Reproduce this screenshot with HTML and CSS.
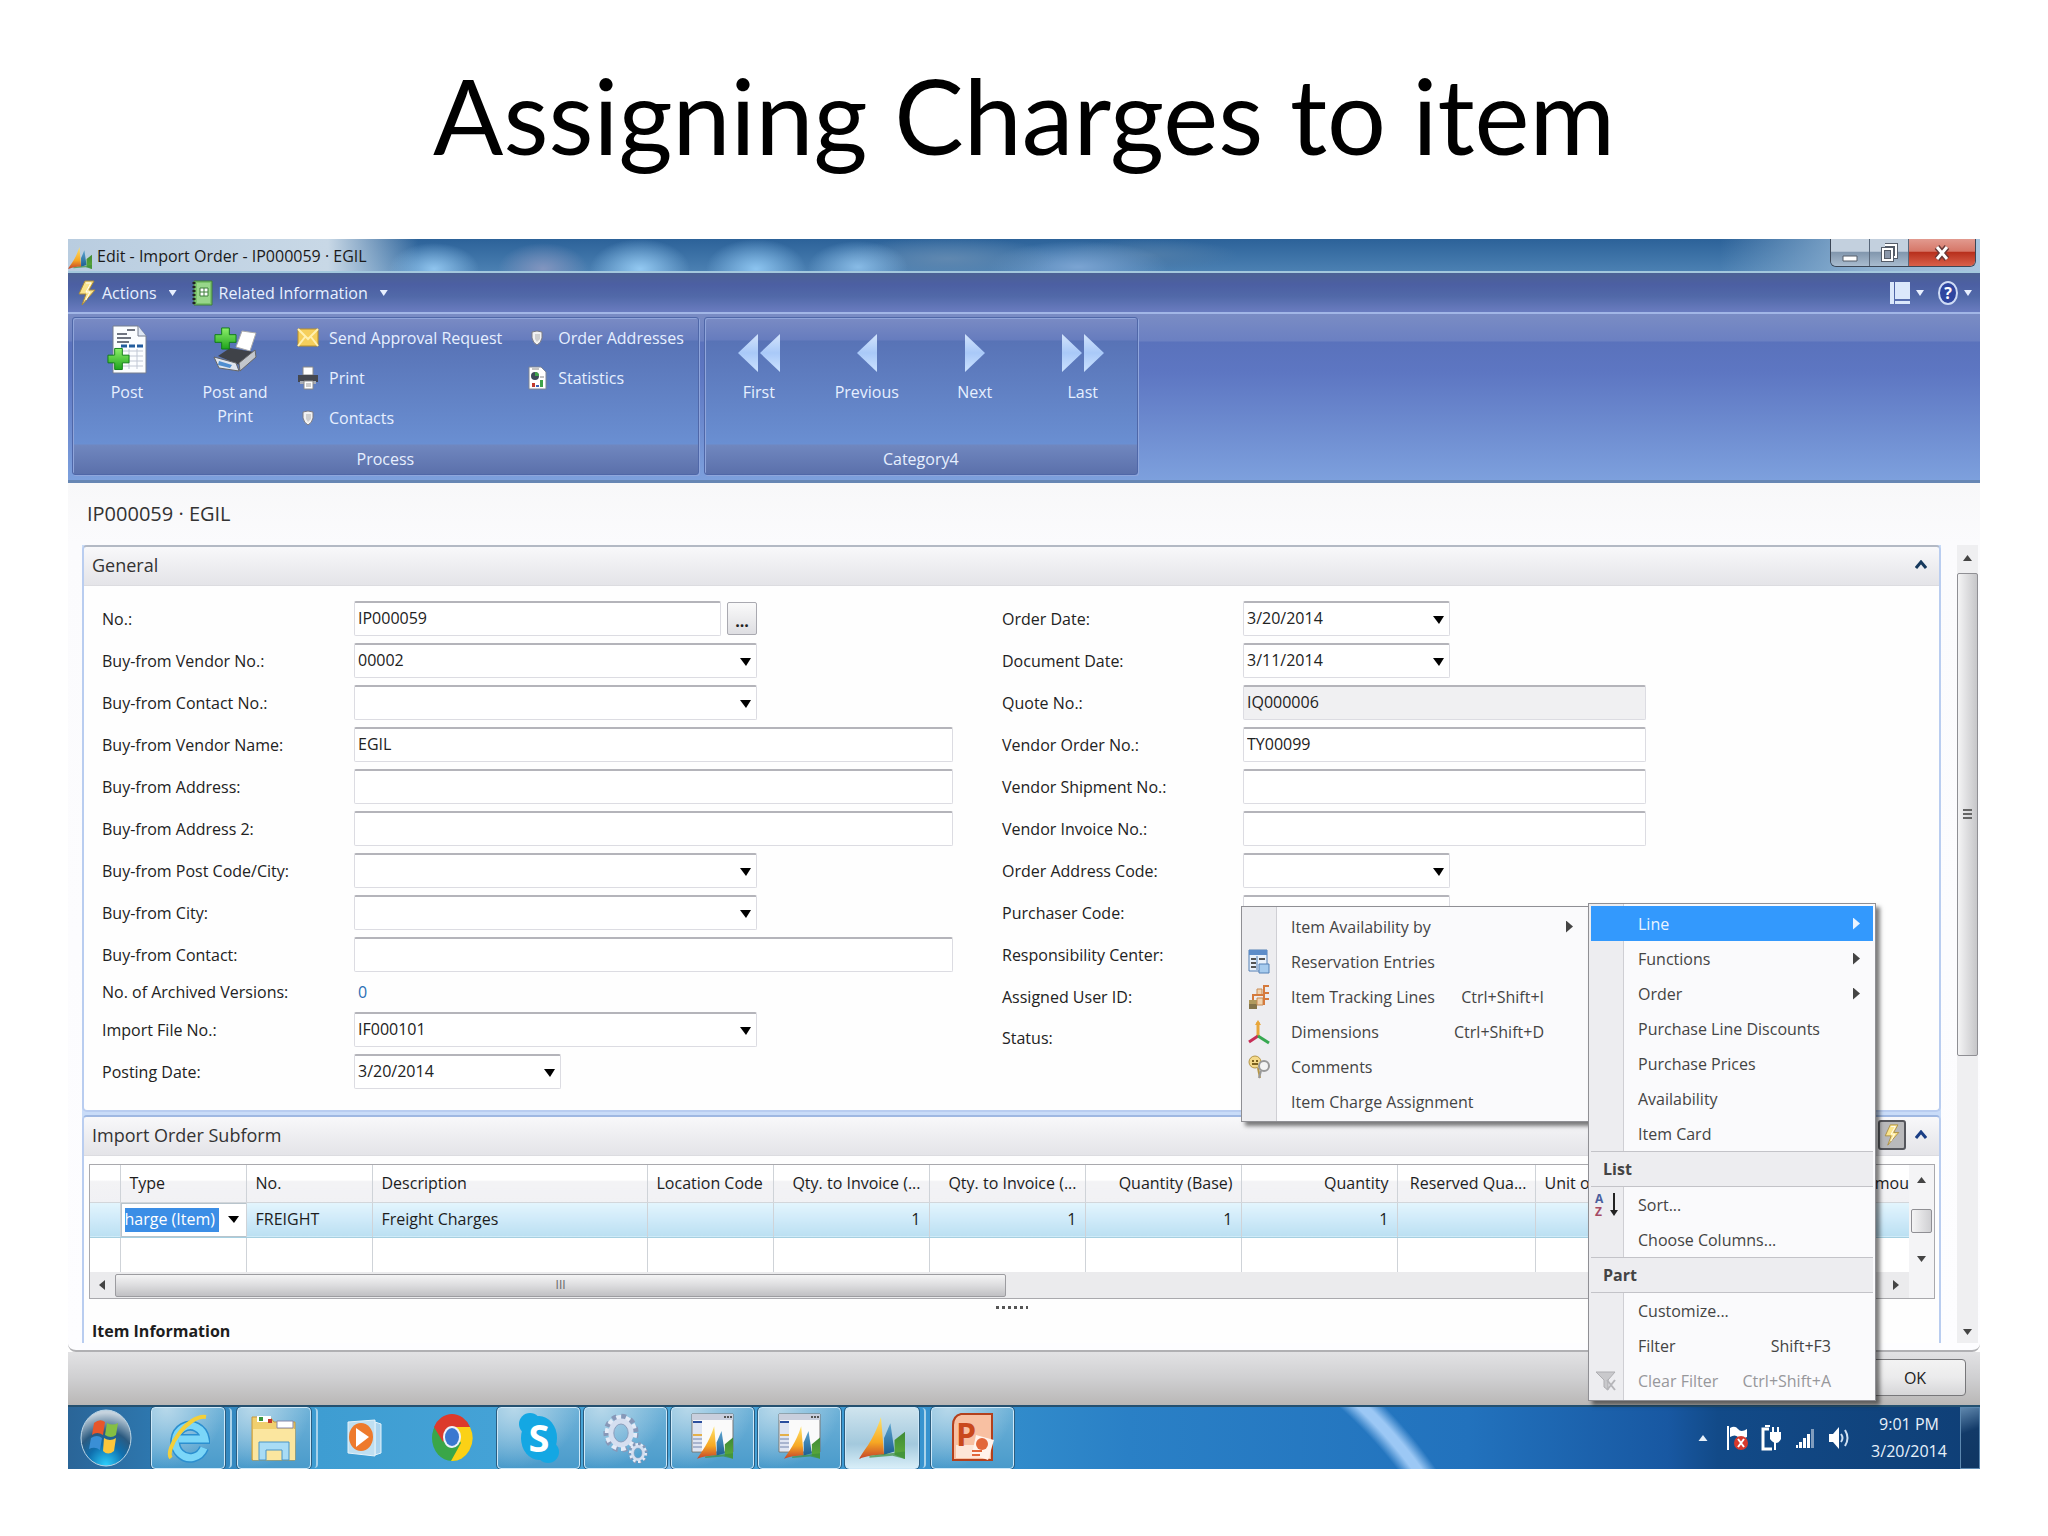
FILE: index.html
```html
<!DOCTYPE html>
<html lang="en">
<head>
<meta charset="utf-8">
<title>Assigning Charges to item</title>
<link rel="stylesheet" href="styles.css">
</head>
<body>
<svg class="defs" aria-hidden="true">
  <defs>
    <linearGradient id="gold" x1="0" y1="0" x2="0" y2="1"><stop offset="0" stop-color="#ffe36a"/><stop offset=".6" stop-color="#f7a823"/><stop offset="1" stop-color="#c4432a"/></linearGradient>
    <linearGradient id="navblue" x1="0" y1="0" x2="0" y2="1"><stop offset="0" stop-color="#5aa3cf"/><stop offset="1" stop-color="#1d5f92"/></linearGradient>
    <linearGradient id="navgreen" x1="0" y1="0" x2="0" y2="1"><stop offset="0" stop-color="#3f8a35"/><stop offset="1" stop-color="#5fae3c"/></linearGradient>
    <linearGradient id="arrow" x1="0" y1="0" x2="0" y2="1"><stop offset="0" stop-color="#d3e4fb"/><stop offset=".5" stop-color="#a9c9f8"/><stop offset="1" stop-color="#cde3ff"/></linearGradient>
    <linearGradient id="plus" x1="0" y1="0" x2="0" y2="1"><stop offset="0" stop-color="#8df06a"/><stop offset="1" stop-color="#1fa31c"/></linearGradient>
    <radialGradient id="orb" cx=".5" cy="1" r=".95"><stop offset="0" stop-color="#2ed3ff"/><stop offset=".4" stop-color="#0f6fae"/><stop offset=".65" stop-color="#2b5a80"/><stop offset="1" stop-color="#c5d3de"/></radialGradient>
    <symbol id="nav" viewBox="0 0 44 44"><path d="M0 42C6 32 14 24 21 2l3 36C14 38 8 39 0 42z" fill="url(#gold)"/><path d="M24 38V22l6-14 4 27z" fill="url(#navblue)"/><path d="M34 38V24l10-8v26z" fill="url(#navgreen)"/><path d="M10 39l34-4v7l-12-3-22 2z" fill="#3c8f3c" opacity=".7"/></symbol>
    <symbol id="navwin" viewBox="0 0 44 50"><path d="M1 1h41v38H1z" fill="#fafafa" stroke="#777"/><path d="M1 1h41v6H1z" fill="#c9cfdd"/><path d="M33 4h2M36 4h2M39 4h2" stroke="#555" stroke-width="2"/><path d="M2 8h9v30H2z" fill="#dfe5f2"/><path d="M2 9h9" stroke="#2c4f9e" stroke-width="2"/><path d="M2 22h9" stroke="#e4b04a" stroke-width="2"/><path d="M2 26h9M2 30h9M2 34h9" stroke="#7083ac"/><use href="#nav" x="6" y="10" width="36" height="39"/></symbol>
    <symbol id="shield" viewBox="0 0 20 20"><path d="M5 4q5-2 10 0v6q-1 5-5 7-4-2-5-7z" fill="#f2f2f2" stroke="#7a7a84"/><path d="M8 6h5v5l-3 3-2-3z" fill="#cfcfcf"/></symbol>
    <symbol id="bigplus" viewBox="0 0 24 24"><path d="M8 1h8v7h7v8h-7v7H8v-7H1V8h7z" fill="url(#plus)" stroke="#0f7d14"/></symbol>
    <symbol id="bolt" viewBox="0 0 18 26"><path d="M7 1h9l-5 9h6L4 25l4-11H1z" fill="#fbe58c" stroke="#a98a3c"/><path d="M8 3h5l-5 9h4l-4 8" fill="none" stroke="#fff" stroke-width="1"/></symbol>
    <symbol id="gear" viewBox="-20 -22 40 44"><ellipse rx="16" ry="18" fill="none" stroke="#8798b8" stroke-width="7" stroke-dasharray="5 5"/><ellipse rx="15" ry="17" fill="none" stroke="#e4ebf7" stroke-width="6" stroke-dasharray="5 5"/><ellipse rx="11" ry="13" fill="none" stroke="#d5dff0" stroke-width="6"/><ellipse rx="8" ry="10" fill="none" stroke="#8798b8"/></symbol>
  </defs>
</svg>

<main class="slide">
  <h1 class="slide-title">Assigning Charges to item</h1>

  <section class="desktop">
    <header class="titlebar">
      <svg class="titlebar-icon" viewBox="0 0 44 44"><use href="#nav"/></svg>
      <span class="titlebar-text">Edit - Import Order - IP000059 · EGIL</span>
      <div class="win-buttons">
        <button class="win-btn" aria-label="Minimize"><svg width="18" height="20" viewBox="0 0 18 20"><path d="M2 13h14v5H2z" fill="#fff" stroke="#555c68"/></svg></button>
        <button class="win-btn" aria-label="Restore"><svg width="20" height="20" viewBox="0 0 20 20"><path d="M6 2h11v12h-2" fill="none" stroke="#555c68" stroke-width="4"/><path d="M6 2h11v12h-2" fill="none" stroke="#fff" stroke-width="2"/><path d="M4 6h9v11H4z" fill="#8a97aa" stroke="#555c68" stroke-width="4"/><path d="M4 6h9v11H4z" fill="none" stroke="#fff" stroke-width="2"/></svg></button>
        <button class="win-btn win-close" aria-label="Close"><svg width="18" height="18" viewBox="0 0 18 18"><path d="M4 3l10 12M14 3L4 15" stroke="#6b3a38" stroke-width="6"/><path d="M4 3l10 12M14 3L4 15" stroke="#fff" stroke-width="3"/></svg></button>
      </div>
    </header>

    <nav class="menubar">
      <button class="menu-btn"><svg width="18" height="26"><use href="#bolt"/></svg>Actions<span class="caret"></span></button>
      <button class="menu-btn"><svg width="22" height="26" viewBox="0 0 22 26"><path d="M3 1h18v24H3z" fill="#7cc46c" stroke="#3f7f3a"/><path d="M6 3h13v20H6z" fill="#98d68a"/><path d="M9 8h8v8H9z" fill="#fff" stroke="#3f7f3a"/><path d="M13 8v8M9 12h8" stroke="#3f7f3a"/><path d="M3 2v23" stroke="#222" stroke-width="3" stroke-dasharray="2 2"/></svg>Related Information<span class="caret"></span></button>
      <div class="menubar-right">
        <button class="menu-btn" aria-label="Layout"><svg width="20" height="24" viewBox="0 0 20 24"><path d="M0 1h4v22H0zM5 1h15v17H5zM5 20h15v3H5z" fill="#dbe8fb"/></svg><span class="caret"></span></button>
        <button class="menu-btn" aria-label="Help"><svg width="20" height="24" viewBox="0 0 20 24"><ellipse cx="10" cy="12" rx="9" ry="11" fill="#2f46a0" stroke="#cfdcf5" stroke-width="2"/><text x="10" y="18" text-anchor="middle" class="icon-help">?</text></svg><span class="caret"></span></button>
      </div>
    </nav>

    <div class="ribbon">
      <div class="ribbon-group">
        <div class="ribbon-body process">
          <button class="big-btn"><svg width="40" height="50" viewBox="0 0 40 50"><path d="M6 1h25l8 10v37H6z" fill="#fbfdff" stroke="#777f90"/><path d="M31 1v10h8" fill="#dfe7f3" stroke="#777f90"/><path d="M10 9h10M10 13h14M10 17h12M20 5h8" stroke="#6f7480" stroke-width="2"/><path d="M14 21h6M22 21h6M30 21h6" stroke="#235d9e" stroke-width="3"/><path d="M14 26h22M14 31h22M14 36h22M14 41h22M22 24v20M30 24v20" stroke="#c0c7d4"/><use href="#bigplus" x="0" y="22" width="23" height="24"/></svg>Post</button>
          <button class="big-btn"><svg width="46" height="50" viewBox="0 0 46 50"><path d="M24 22l6-16 14 2-6 18z" fill="#fff" stroke="#aaa"/><path d="M6 31l12-8 24 4-12 14z" fill="#3f4248"/><path d="M2 32l22 6 3 8-20-3z" fill="#dfe5ee" stroke="#666"/><path d="M27 38l16-13 1 7-16 14z" fill="#c3c7cc" stroke="#666"/><path d="M7 36l13 4-2 3-12-3z" fill="#4f8ed0"/><use href="#bigplus" x="2" y="1" width="23" height="25"/></svg>Post and<br>Print</button>
          <div class="small-col">
            <button class="small-btn"><svg width="22" height="20" viewBox="0 0 22 20"><path d="M1 1h20v17H1z" fill="#f6cf5c" stroke="#b98f28"/><path d="M1 1l10 10L21 1M1 18l7-9M21 18l-7-9" fill="none" stroke="#fff0b0" stroke-width="2"/></svg>Send Approval Request</button>
            <button class="small-btn"><svg width="22" height="24" viewBox="0 0 22 24"><path d="M6 1h10v8H6z" fill="#fff" stroke="#888"/><path d="M1 9h20v7H1z" fill="#44474f"/><path d="M3 15h16v3H3z" fill="#a9adb5"/><path d="M7 15h9v8H7z" fill="#fff" stroke="#888"/><path d="M9 18h5M9 20h5" stroke="#999"/></svg>Print</button>
            <button class="small-btn"><svg width="22" height="20" viewBox="0 0 20 20"><use href="#shield"/></svg>Contacts</button>
          </div>
          <div class="small-col">
            <button class="small-btn"><svg width="22" height="20" viewBox="0 0 20 20"><use href="#shield"/></svg>Order Addresses</button>
            <button class="small-btn"><svg width="22" height="24" viewBox="0 0 22 24"><path d="M3 1h12l5 5v17H3z" fill="#fff" stroke="#7d8596"/><circle cx="9" cy="10" r="4" fill="#3c4a58"/><path d="M9 10V6a4 4 0 0 1 4 4z" fill="#3fa34a"/><path d="M14 11h4M6 3h7" stroke="#888"/><path d="M6 17h3v4H6z" fill="#c23b2e"/><path d="M10 19h3v2h-3z" fill="#3c62b8"/><path d="M14 14h3v7h-3z" fill="#3fa34a"/></svg>Statistics</button>
          </div>
        </div>
        <div class="ribbon-caption">Process</div>
      </div>
      <div class="ribbon-group">
        <div class="ribbon-body">
          <button class="big-btn"><svg width="42" height="50" viewBox="0 0 42 50"><path d="M20 9v38L0 28zM42 9v38L22 28z" fill="url(#arrow)"/></svg>First</button>
          <button class="big-btn"><svg width="20" height="50" viewBox="0 0 20 50"><path d="M20 9v38L0 28z" fill="url(#arrow)"/></svg>Previous</button>
          <button class="big-btn"><svg width="20" height="50" viewBox="0 0 20 50"><path d="M0 9v38l20-19z" fill="url(#arrow)"/></svg>Next</button>
          <button class="big-btn"><svg width="42" height="50" viewBox="0 0 42 50"><path d="M0 9v38l20-19zM22 9v38l20-19z" fill="url(#arrow)"/></svg>Last</button>
        </div>
        <div class="ribbon-caption">Category4</div>
      </div>
    </div>

    <div class="page">
      <h2 class="page-title">IP000059 · EGIL</h2>
      <div class="scroller">
        <div class="panels">
          <section class="panel">
            <header class="panel-head"><h3>General</h3><button class="chev" aria-label="Collapse General"><svg width="12" height="10" viewBox="0 0 12 10"><path d="M1 8l5-6 5 6" fill="none" stroke="#173a5e" stroke-width="3"/></svg></button></header>
            <form class="fields">
              <div class="col col-left">
                <label for="f1">No.:</label><div class="with-btn"><input id="f1" class="mid" value="IP000059"><button type="button" class="assist" aria-label="Assist edit">...</button></div>
                <label for="f2">Buy-from Vendor No.:</label><select id="f2" class="mid"><option>00002</option></select>
                <label for="f3">Buy-from Contact No.:</label><select id="f3" class="mid"><option></option></select>
                <label for="f4">Buy-from Vendor Name:</label><input id="f4" value="EGIL">
                <label for="f5">Buy-from Address:</label><input id="f5">
                <label for="f6">Buy-from Address 2:</label><input id="f6">
                <label for="f7">Buy-from Post Code/City:</label><select id="f7" class="mid"><option></option></select>
                <label for="f8">Buy-from City:</label><select id="f8" class="mid"><option></option></select>
                <label for="f9">Buy-from Contact:</label><input id="f9">
                <span class="lbl">No. of Archived Versions:</span><a class="count" href="#">0</a>
                <label for="f10">Import File No.:</label><select id="f10" class="mid"><option>IF000101</option></select>
                <label for="f11">Posting Date:</label><select id="f11" class="short"><option>3/20/2014</option></select>
              </div>
              <div class="col col-right">
                <label for="g1">Order Date:</label><select id="g1" class="short"><option>3/20/2014</option></select>
                <label for="g2">Document Date:</label><select id="g2" class="short"><option>3/11/2014</option></select>
                <label for="g3">Quote No.:</label><input id="g3" class="readonly" value="IQ000006" readonly>
                <label for="g4">Vendor Order No.:</label><input id="g4" value="TY00099">
                <label for="g5">Vendor Shipment No.:</label><input id="g5">
                <label for="g6">Vendor Invoice No.:</label><input id="g6">
                <label for="g7">Order Address Code:</label><select id="g7" class="short"><option></option></select>
                <label for="g8">Purchaser Code:</label><select id="g8" class="short"><option></option></select>
                <label for="g9">Responsibility Center:</label><select id="g9" class="short"><option></option></select>
                <label for="g10">Assigned User ID:</label><select id="g10" class="short"><option></option></select>
                <span class="lbl">Status:</span>
              </div>
            </form>
          </section>

          <section class="panel subform">
            <header class="panel-head"><h3>Import Order Subform</h3><button class="bolt-btn" aria-label="Line actions"><svg width="16" height="22"><use href="#bolt"/></svg></button><button class="chev" aria-label="Collapse Import Order Subform"><svg width="12" height="10" viewBox="0 0 12 10"><path d="M1 8l5-6 5 6" fill="none" stroke="#1b3f86" stroke-width="3"/></svg></button></header>
            <div class="grid-box">
              <div class="grid-main">
                <table class="grid">
                  <colgroup><col class="c-sel"><col class="c-type"><col class="c-type"><col class="c-desc"><col class="c-type"><col class="c-qty"><col class="c-qty"><col class="c-qty"><col class="c-qty"><col class="c-res"><col class="c-unit"><col></colgroup>
                  <thead><tr><th></th><th>Type</th><th>No.</th><th>Description</th><th>Location Code</th><th class="num">Qty. to Invoice (...</th><th class="num">Qty. to Invoice (...</th><th class="num">Quantity (Base)</th><th class="num">Quantity</th><th class="num">Reserved Qua...</th><th>Unit of</th><th class="last">Line Amou</th></tr></thead>
                  <tbody>
                    <tr class="current"><td></td><td class="edit"><select aria-label="Type"><option>harge (Item)</option></select></td><td>FREIGHT</td><td>Freight Charges</td><td></td><td class="num">1</td><td class="num">1</td><td class="num">1</td><td class="num">1</td><td></td><td></td><td></td></tr>
                    <tr><td></td><td></td><td></td><td></td><td></td><td></td><td></td><td></td><td></td><td></td><td></td><td></td></tr>
                  </tbody>
                </table>
                <div class="hscroll"><span class="tri left"></span><div class="hthumb"><span class="grip">III</span></div><span class="tri right"></span></div>
              </div>
              <div class="gscroll"><span class="tri up"></span><div class="gthumb"></div><span class="tri down"></span></div>
            </div>
            <div class="splitter"></div>
            <h4 class="info">Item Information</h4>
          </section>
        </div>
        <div class="vscroll"><span class="tri up"></span><div class="vthumb"><span class="vgrip"></span></div><span class="tri down"></span></div>
      </div>
    </div>

    <footer class="actions"><button class="ok">OK</button></footer>

    <nav class="taskbar">
      <button class="orb" aria-label="Start"><svg width="54" height="58" viewBox="0 0 54 58"><ellipse cx="27" cy="29" rx="25" ry="28" fill="url(#orb)" stroke="#bcd6e6"/><path d="M15 14q6-5 11-1l-2 13q-6-4-11 0z" fill="#e8562a"/><path d="M28 14q6 3 11 0l-2 12q-5 4-11 0z" fill="#85bf43"/><path d="M12 29q6-4 11 0l-2 12q-5-4-11-1z" fill="#3a8fd6"/><path d="M25 29q6 4 12 0l-2 13q-6 5-11 0z" fill="#fcc63b"/></svg></button>
      <button class="task stacked" aria-label="Internet Explorer"><svg width="44" height="52" viewBox="0 0 44 52"><path d="M38 36A15 16 0 1 1 39 27H13" fill="none" stroke="#2b8fd0" stroke-width="10"/><path d="M38 36A15 16 0 1 1 39 27H13" fill="none" stroke="#7bd6f8" stroke-width="7"/><path d="M5 46C-2 38 22 2 40 5" fill="none" stroke="#f3cf3b" stroke-width="4"/></svg></button>
      <button class="task stacked" aria-label="File Explorer"><svg width="46" height="48" viewBox="0 0 46 48"><path d="M1 3h18l4 5h21v38H1z" fill="#f0cf6e" stroke="#c79a3b"/><path d="M6 2h14v6H6z" fill="#fff"/><path d="M8 3h4v4H8z" fill="#39943c"/><path d="M17 5h4v4h-4z" fill="#c2352b"/><path d="M26 7h16v7H26z" fill="#fff" stroke="#88a"/><path d="M2 15h42v31H2z" fill="#fbe69f"/><path d="M8 46V28h30v18h-7V36H15v10z" fill="#a9dcf5" stroke="#4a94c4"/></svg></button>
      <button class="task flat" aria-label="Media Player"><svg width="36" height="38" viewBox="0 0 36 38"><path d="M28 3l6 2v29l-6 2z" fill="#a9d3ee" stroke="#e2f2fb"/><path d="M1 3l27-2v36L1 34z" fill="#bfdff1" stroke="#e6f3fa"/><ellipse cx="14" cy="18" rx="12" ry="14" fill="#ee7a2c"/><path d="M9 9l13 9-13 10z" fill="#fff"/></svg></button>
      <button class="task flat" aria-label="Chrome"><svg width="42" height="48" viewBox="0 0 42 48"><ellipse cx="21" cy="24" rx="20" ry="23" fill="#3aa648"/><path d="M3 13A20 23 0 0 1 39 13H21L12 28z" fill="#dc3a2c"/><path d="M39 13A20 23 0 0 1 20 47l10-18-9-16z" fill="#fbd116"/><ellipse cx="21" cy="23" rx="9" ry="11" fill="#eef3fa"/><ellipse cx="21" cy="23" rx="7" ry="9" fill="#3b78d0"/></svg></button>
      <button class="task" aria-label="Skype"><svg width="42" height="54" viewBox="0 0 42 54"><ellipse cx="21" cy="27" rx="18" ry="22" fill="#14a7e3"/><circle cx="12" cy="13" r="11" fill="#14a7e3"/><circle cx="30" cy="41" r="11" fill="#14a7e3"/><text x="21" y="41" text-anchor="middle" class="icon-skype">S</text></svg></button>
      <button class="task" aria-label="Services"><svg width="46" height="52" viewBox="0 0 46 52"><use href="#gear" x="0" y="1" width="36" height="40"/><use href="#gear" x="25" y="30" width="20" height="22"/></svg></button>
      <button class="task" aria-label="Dynamics NAV"><svg width="44" height="50"><use href="#navwin"/></svg></button>
      <button class="task" aria-label="Dynamics NAV"><svg width="44" height="50"><use href="#navwin"/></svg></button>
      <button class="task stacked active" aria-label="Dynamics NAV client"><svg width="46" height="46"><use href="#nav"/></svg></button>
      <button class="task" aria-label="PowerPoint"><svg width="42" height="50" viewBox="0 0 42 50"><path d="M9 1h31v46H1V12Q1 3 9 1z" fill="#f8c0a2" stroke="#b3401c" stroke-width="2"/><path d="M4 32h34v13H4z" fill="#fde6d8"/><path d="M24 22l18 5-6 20-16-6z" fill="#fff3ec"/><circle cx="30" cy="31" r="6" fill="#e2673a"/><path d="M20 38h10M20 42h8" stroke="#e2673a" stroke-width="2"/><text x="14" y="33" text-anchor="middle" class="icon-ppt">P</text></svg></button>
      <div class="tray">
        <button class="tray-btn" aria-label="Show hidden icons"><svg width="10" height="6" viewBox="0 0 12 8"><path d="M6 0l6 8H0z" fill="#e6f0fa"/></svg></button>
        <button class="tray-btn" aria-label="Action Center"><svg width="22" height="26" viewBox="0 0 22 26"><path d="M2 1v24" stroke="#fff" stroke-width="2"/><path d="M4 3q5-3 8 1t9 0v8q-6 3-9 0t-8 0z" fill="#fff"/><circle cx="15" cy="18" r="7" fill="#d8392c"/><path d="M12 14l6 8M18 14l-6 8" stroke="#fff" stroke-width="2"/></svg></button>
        <button class="tray-btn" aria-label="Power"><svg width="22" height="26" viewBox="0 0 22 26"><path d="M9 4H3v20h9" fill="none" stroke="#fff" stroke-width="3"/><path d="M5 1h5" stroke="#fff" stroke-width="2"/><path d="M10 7h11v7q-2 4-5 4t-6-4z" fill="#fff"/><path d="M13 2v5M18 2v5M15 17v8" stroke="#fff" stroke-width="2"/></svg></button>
        <button class="tray-btn" aria-label="Network"><svg width="20" height="20" viewBox="0 0 20 20"><path d="M1 17h2v3H1zM4 14h3v6H4zM8 10h3v10H8zM12 6h3v14h-3z" fill="#fff"/><path d="M16 1h3v19h-3z" fill="#7f9cbd"/></svg></button>
        <button class="tray-btn" aria-label="Volume"><svg width="22" height="24" viewBox="0 0 22 24"><path d="M1 8h4l6-7v22l-6-7H1z" fill="#fff"/><path d="M13 8q3 4 0 8M17 4q5 8 0 16" fill="none" stroke="#cfe0f2" stroke-width="2"/></svg></button>
        <div class="clock">9:01 PM<br>3/20/2014</div>
        <button class="show-desktop" aria-label="Show desktop"></button>
      </div>
    </nav>

    <ul class="popup submenu">
      <li><button><span class="ic"></span><span class="tx">Item Availability by</span><span class="more"></span></button></li>
      <li><button><span class="ic"><svg width="22" height="26" viewBox="0 0 22 26"><path d="M1 1h18v21H1z" fill="#e9f1fb" stroke="#5580b5"/><path d="M1 1h18v5H1z" fill="#5c8cc9"/><path d="M3 10h5M3 14h5M3 18h5M11 10h6" stroke="#555" stroke-width="2"/><path d="M9 7v14" stroke="#5580b5"/><path d="M11 15h10v9H11z" fill="#a6cbee" stroke="#5580b5"/></svg></span><span class="tx">Reservation Entries</span></button></li>
      <li><button><span class="ic"><svg width="22" height="26" viewBox="0 0 22 26"><path d="M1 16h8v9H1z" fill="#84744a"/><path d="M1 16h8v4H1z" fill="#b09a5e"/><path d="M9 14h6v7H9zM9 5h5v6H9z" fill="#f0d3b0" stroke="#c98b52"/><path d="M21 2h-5v19M16 9h5M16 15h5M5 16v-5h11" fill="none" stroke="#d57a3c" stroke-width="2"/></svg></span><span class="tx">Item Tracking Lines</span><kbd>Ctrl+Shift+I</kbd></button></li>
      <li><button><span class="ic"><svg width="22" height="26" viewBox="0 0 22 26"><path d="M10 17V3" stroke="#e8a63a" stroke-width="3"/><path d="M7 6l3-5 3 5z" fill="#e8a63a"/><path d="M10 17l-9 6" stroke="#c72d56" stroke-width="3"/><path d="M10 17l11 7" stroke="#37a850" stroke-width="3"/></svg></span><span class="tx">Dimensions</span><kbd>Ctrl+Shift+D</kbd></button></li>
      <li><button><span class="ic"><svg width="22" height="26" viewBox="0 0 22 26"><ellipse cx="7" cy="8" rx="6" ry="6" fill="#f4d98a" stroke="#b59545"/><path d="M4 7h2M8 7h2M4 10h6" stroke="#7d6220" stroke-width="2"/><path d="M10 14l2 10" stroke="#b59545" stroke-width="2"/><circle cx="16" cy="12" r="5" fill="#f4f4f4" stroke="#999" stroke-width="2"/><path d="M13 17l-2 7" stroke="#999" stroke-width="2"/></svg></span><span class="tx">Comments</span></button></li>
      <li><button><span class="ic"></span><span class="tx">Item Charge Assignment</span></button></li>
    </ul>

    <ul class="popup mainmenu">
      <li><button class="hot"><span class="ic"></span><span class="tx">Line</span><span class="more"></span></button></li>
      <li><button><span class="ic"></span><span class="tx">Functions</span><span class="more"></span></button></li>
      <li><button><span class="ic"></span><span class="tx">Order</span><span class="more"></span></button></li>
      <li><button><span class="ic"></span><span class="tx">Purchase Line Discounts</span></button></li>
      <li><button><span class="ic"></span><span class="tx">Purchase Prices</span></button></li>
      <li><button><span class="ic"></span><span class="tx">Availability</span></button></li>
      <li><button><span class="ic"></span><span class="tx">Item Card</span></button></li>
      <li class="head">List</li>
      <li><button><span class="ic sort"><span class="az"><span>A</span><span>Z</span></span><svg width="8" height="26" viewBox="0 0 8 26"><path d="M4 1v20" stroke="#222" stroke-width="2"/><path d="M0 18h8l-4 6z" fill="#222"/></svg></span><span class="tx">Sort...</span></button></li>
      <li><button><span class="ic"></span><span class="tx">Choose Columns...</span></button></li>
      <li class="head">Part</li>
      <li><button><span class="ic"></span><span class="tx">Customize...</span></button></li>
      <li><button><span class="ic"></span><span class="tx">Filter</span><kbd>Shift+F3</kbd></button></li>
      <li><button disabled><span class="ic"><svg width="22" height="22" viewBox="0 0 22 22"><path d="M1 2h19l-7 8v10l-4-3v-7z" fill="#c9c9cc" stroke="#adadb1"/><path d="M12 10l8 10M20 10l-8 10" stroke="#b5b5b9" stroke-width="2"/></svg></span><span class="tx">Clear Filter</span><kbd>Ctrl+Shift+A</kbd></button></li>
    </ul>
  </section>
</main>
</body>
</html>
```
FILE: styles.css
```css
* { box-sizing: border-box; }
body { margin: 0; background: #fff; color: #222; font: 16px/24px "Open Sans", "Noto Sans", sans-serif; }
h1, h2, h3, h4, ul { margin: 0; padding: 0; font-weight: 400; }
button, input, select { font: inherit; color: inherit; margin: 0; }
button { background: none; border: 0; padding: 0; }
svg { display: block; flex: none; }
.defs { position: absolute; width: 0; height: 0; }

.slide { padding: 0 68px 68px; }
.slide-title { padding: 45px 0 54px; text-align: center; font: 104px/140px Lato, sans-serif; color: #000; }
.desktop { position: relative; display: flex; flex-direction: column; overflow: hidden; }

/* title bar */
.titlebar { display: flex; align-items: flex-start; height: 34px; padding-right: 4px; border-bottom: 2px solid #a3c8dd; color: #1a1a1a;
  background:
    radial-gradient(ellipse 45px 26px at 366px 30px, #8fc4ee, transparent),
    radial-gradient(ellipse 45px 26px at 475px 30px, #8295bf, transparent),
    radial-gradient(ellipse 50px 30px at 572px 30px, #93c9f2, transparent),
    radial-gradient(ellipse 50px 30px at 688px 30px, #8cc4f0, transparent),
    radial-gradient(ellipse 50px 26px at 790px 28px, #88bbe6, transparent),
    radial-gradient(ellipse 110px 22px at 880px 20px, #6088b0, transparent),
    radial-gradient(ellipse 90px 26px at 1010px 28px, #7ba4d2, transparent),
    radial-gradient(ellipse 90px 16px at 1080px 16px, #4f7ca8, transparent),
    linear-gradient(90deg, #b9cde0 0, #c8d8e6 260px, transparent 350px, transparent calc(100% - 260px), #8fb2d2 calc(100% - 110px), #a9c6df),
    linear-gradient(#2c6299, #4b80b2); }
.titlebar-icon { width: 24px; height: 26px; margin: 6px 5px 0 0; }
.titlebar-text { padding-top: 5px; }
.win-buttons { display: flex; margin-left: auto; border: 1px solid #3b4656; border-top: 0; border-radius: 0 0 6px 6px; overflow: hidden; }
.win-btn { display: flex; align-items: center; justify-content: center; width: 39px; height: 27px; border-right: 1px solid #58677a; background: linear-gradient(#c3d0de 45%, #8297ae 50%, #a9bccf); }
.win-close { width: 66px; border-right: 0; background: linear-gradient(#e29a8f 0, #d67768 45%, #b8301d 50%, #d9604a); }

/* menu bar */
.menubar { display: flex; align-items: center; gap: 14px; height: 41px; padding: 1px 8px 0 10px; color: #e8f0ff; background: linear-gradient(#4c6294, #4c5fa3 30%, #5169a8 60%, #6a7cc0); border-bottom: 2px solid #a2b6e6; }
.menu-btn { display: flex; align-items: center; gap: 6px; }
.caret { width: 8px; height: 6px; margin-left: 6px; background: currentColor; clip-path: polygon(0 0, 100% 0, 50% 100%); }
.menubar-right { display: flex; gap: 14px; margin-left: auto; }
.menubar-right .caret { margin-left: 0; }
.icon-help { font: 700 16px "Open Sans", sans-serif; fill: #fff; }

/* ribbon */
.ribbon { display: flex; gap: 5px; height: 169px; padding: 3px 5px 5px 4px; color: #e6efff; background: linear-gradient(#7a8cc4, #6b80c2 27px, #5a72bc 28px, #5d76c2 35%, #7da0dd); border-bottom: 3px solid #6787b4; }
.ribbon-group { display: flex; flex-direction: column; border: 1px solid #4f67a8; border-radius: 3px; box-shadow: inset 1px 1px #90a5da, 1px 1px #8fa6dc; background: linear-gradient(#7a8bc4, #667cbe 22px, #5873b6 23px, #6a8fd2 126px, #7087bf 127px, #5b70ab); }
.ribbon-body { display: flex; flex: 1; padding: 7px 0 0; }
.ribbon-body.process { padding-right: 14px; }
.big-btn { display: flex; flex-direction: column; align-items: center; width: 108px; line-height: 24px; }
.big-btn svg { margin-bottom: 5px; }
.small-col { display: flex; flex-direction: column; margin: -7px 0 0 8px; }
.small-col + .small-col { margin-left: 24px; }
.small-btn { display: flex; align-items: center; gap: 10px; height: 40px; line-height: 24px; white-space: nowrap; }
.ribbon-caption { height: 31px; line-height: 32px; text-align: center; }

/* page */
.page { background: linear-gradient(#f8f8f9, #fbfbfd 60px, #fdfdff); padding: 0 0 7px; border-bottom: 2px solid #b0b0b3; border-radius: 0 0 8px 8px; }
.page-title { padding: 15px 19px; font-size: 20px; line-height: 32px; color: #333; }
.scroller { display: flex; gap: 16px; padding: 0 2px 0 14px; }
.panels { flex: 1; min-width: 0; display: flex; flex-direction: column; gap: 3px; background: #c9dcf8; }
.panel { background: #fefefe; border: 2px solid #b9cdf0; border-top-color: #b3b9c4; border-radius: 5px; }
.panel-head { display: flex; align-items: center; height: 39px; padding: 0 12px 3px 8px; background: linear-gradient(#f8f8fa, #e4e4e8); border-bottom: 1px solid #dcdce0; border-radius: 4px 4px 0 0; }
.panel-head h3 { font-size: 18px; line-height: 24px; margin-right: auto; color: #333; }
.chev { width: 12px; height: 20px; display: flex; align-items: center; }
.fields { display: flex; gap: 49px; padding: 15px 20px 21px 18px; color: #222; }
.col { display: grid; row-gap: 7px; grid-auto-rows: minmax(26px, auto); align-items: center; align-content: start; }
.col-left { grid-template-columns: 252px 599px; }
.col-right { grid-template-columns: 241px 403px; }
.col label, .lbl { line-height: 26px; white-space: nowrap; }
.col-right .lbl { line-height: 35px; }
.fields input, .fields select { width: 100%; height: 35px; padding: 0 3px 2px; border: 1px solid #dcdce2; border-top: 2px solid #b4b4ba; border-radius: 2px; background: #fff; color: #222; }
.fields select { appearance: none; background: #fff url("data:image/svg+xml,%3Csvg xmlns='http://www.w3.org/2000/svg' width='11' height='8'%3E%3Cpath d='M0 0h11L6 8z'/%3E%3C/svg%3E") no-repeat right 5px top 13px; }
.fields .readonly { background: #f0f0f2; }
.fields .mid { width: 403px; }
.fields .short { width: 207px; }
.with-btn { display: flex; align-items: center; gap: 6px; }
.with-btn .mid { width: 367px; }
.assist { width: 30px; height: 33px; padding-top: 5px; border: 1px solid #a9a9b0; border-radius: 2px; background: linear-gradient(#fafafa, #dedee2); font-weight: 700; }
.count { color: #2a6fb5; text-decoration: none; line-height: 26px; padding-left: 4px; }

/* subform */
.subform { border-bottom: 0; border-radius: 5px 5px 0 0; border-top-color: #9fb8e2; }
.bolt-btn { display: flex; align-items: center; justify-content: center; width: 28px; height: 30px; margin-right: 9px; border: 2px solid #55565c; border-radius: 3px; background: #b9b9bb; }
.grid-box { display: flex; margin: 8px 4px 0 5px; border: 1px solid #a9a9ad; background: #fff; }
.grid-main { flex: 1; min-width: 0; }
.grid { width: 100%; table-layout: fixed; border-collapse: collapse; color: #1d1d1d; }
.grid th, .grid td { padding: 0 9px; border-right: 1px solid #cfd3d8; text-align: left; font-weight: 400; white-space: nowrap; overflow: hidden; }
.grid th { height: 37px; background: linear-gradient(#fff 40%, #f3f3f5 45%, #f1f1f4); border-bottom: 1px solid #d2d6da; }
.grid td { height: 35px; padding-bottom: 2px; }
.grid .num { text-align: right; padding-right: 8px; padding-left: 8px; }
.grid .last { padding: 0; text-align: right; }
.grid .last, .grid td:last-child { border-right: 0; }
.grid .current td { border-bottom: 1px solid #a5cfe0; background: linear-gradient(#e3f5fd, #cfeaf9 50%, #bbe0f2); }
.grid .edit { padding: 0; }
.grid .edit select { display: block; width: 100%; height: 34px; padding: 0 0 2px 3px; border: 1px solid #b8c4cc; border-right: 0; appearance: none; color: #fff;
  background: url("data:image/svg+xml,%3Csvg xmlns='http://www.w3.org/2000/svg' width='11' height='7'%3E%3Cpath d='M0 0h11L6 7z'/%3E%3C/svg%3E") no-repeat right 7px center, linear-gradient(#3b8ee6, #3b8ee6) no-repeat 3px 4px / 94px 24px, #fff; }
.c-sel { width: 30px; } .c-type { width: 126px; } .c-desc { width: 275px; } .c-qty { width: 156px; } .c-res { width: 138px; } .c-unit { width: 186px; }
.hscroll { display: flex; align-items: center; height: 26px; background: #ebebed; }
.hscroll .tri { margin: 0 10px 0 9px; }
.hscroll .right { margin-left: auto; }
.hthumb { display: flex; align-items: center; justify-content: center; width: 49%; height: 23px; border: 1px solid #9c9ca0; border-radius: 2px; background: linear-gradient(#f4f4f5, #dcdcde 50%, #c0c0c3); }
.grip { font-size: 12px; line-height: 12px; color: #666; }
.gscroll { display: flex; flex-direction: column; align-items: center; width: 25px; padding: 12px 0 36px; background: #f4f4f6; }
.gthumb { width: 21px; height: 24px; margin-top: 26px; margin-bottom: auto; border: 1px solid #8f8f94; border-radius: 2px; background: linear-gradient(90deg, #f4f4f5, #cfcfd2); }
.tri { flex: none; width: 9px; height: 6px; background: #444; }
.up { clip-path: polygon(50% 0, 100% 100%, 0 100%); }
.down { clip-path: polygon(0 0, 100% 0, 50% 100%); }
.left { width: 6px; height: 10px; clip-path: polygon(0 50%, 100% 0, 100% 100%); }
.right { width: 6px; height: 10px; clip-path: polygon(0 0, 100% 50%, 0 100%); }
.splitter { width: 32px; height: 3px; margin: 7px auto 0; background: repeating-linear-gradient(90deg, #555 0 3px, transparent 3px 6px); }
.info { padding: 10px 8px 0; font-size: 16px; line-height: 24px; font-weight: 700; color: #1d1d1d; }
.vscroll { display: flex; flex-direction: column; align-items: center; width: 21px; padding: 10px 0 8px; background: #efeff1; }
.vthumb { display: flex; align-items: center; justify-content: center; width: 21px; height: 483px; margin: 12px 0 auto; border: 1px solid #8f8f94; border-radius: 2px; background: linear-gradient(90deg, #f4f4f5, #c6c6c9); }
.vgrip { width: 9px; height: 11px; background: repeating-linear-gradient(#666 0 2px, transparent 2px 4px); }

/* footer */
.actions { display: flex; justify-content: flex-end; padding: 7px 14px 9px; background: linear-gradient(#e2e2e4, #cfcfd1 50%, #b9b7b6); }
.ok { width: 102px; height: 37px; border: 1px solid #77777a; border-radius: 4px; background: linear-gradient(#f3f3f3, #ebebec 50%, #d6d6d8); color: #222; }

/* taskbar */
.taskbar { display: flex; align-items: stretch; gap: 4px; height: 64px; border-top: 2px solid #24506f; overflow: hidden;
  background:
    radial-gradient(circle 500px at 980px 330px, transparent 440px, #9cc8f5 452px, #9cc8f5 460px, transparent 472px) no-repeat 0 0 / 1400px 100%,
    linear-gradient(90deg, #2a6598 0, #2f7fb8 120px, #3e9dd2 250px, #4aa7da 600px, #3490cd 900px, #2a80c6 1060px, #2272bd 1400px, #1858a2 1600px, #124a88 1650px, #0f3f76); }
.orb { display: flex; align-items: center; justify-content: center; width: 76px; margin-right: 3px; }
.task { position: relative; display: flex; align-items: center; justify-content: center; width: 83px; border: 1px solid #cde8f8; border-radius: 4px; outline: 1px solid #2b5d80; background: radial-gradient(ellipse at 20% 0, #b7d8ea, transparent 70%), linear-gradient(#6fb2d8, #4a9bcb); }
.task.flat { border-color: transparent; background: none; outline: 0; }
.task.stacked { width: 74px; margin-right: 8px; }
.task.stacked::after { content: ""; position: absolute; right: -8px; top: 0; bottom: 0; width: 5px; border-right: 2px solid #a8d2ea; border-radius: 0 4px 4px 0; }
.task.active { background: linear-gradient(#cfe4ee, #a3c9dd 60%, #d8eef8); }
.icon-skype { font: 700 38px "Open Sans", sans-serif; fill: #fff; }
.icon-ppt { font: 700 32px "Open Sans", sans-serif; fill: #c9481c; }
.tray { display: flex; align-items: center; gap: 12px; margin-left: auto; color: #e7f1fb; }
.tray-btn { display: flex; align-items: center; justify-content: center; width: 22px; height: 40px; }
.clock { width: 90px; margin-left: 2px; text-align: center; line-height: 27px; }
.show-desktop { align-self: stretch; width: 20px; margin-left: -6px; border: 1px solid #5c88b0; background: linear-gradient(160deg, #5f87ad, #123a68 40%, #0f3663); }

/* popup menus lie over the window */
.popup { position: absolute; list-style: none; padding: 2px; border: 1px solid #8f8f94; background: linear-gradient(90deg, #ededf0 34px, #cfcfd4 34px, #cfcfd4 35px, #fafafc 35px); box-shadow: 4px 4px 4px rgba(0, 0, 0, .5); color: #444; }
.mainmenu { top: 664px; right: 104px; width: 288px; }
.submenu { top: 667px; right: 391px; width: 348px; }
.popup button { display: flex; align-items: center; width: 100%; height: 35px; text-align: left; white-space: nowrap; }
.ic { width: 47px; padding-left: 4px; }
.sort { display: flex; align-items: center; gap: 4px; }
.az { display: grid; width: 11px; font-size: 12px; line-height: 13px; font-weight: 700; color: #a54a64; }
.az span:first-child { color: #4a5f9e; }
.tx { margin-right: auto; }
.more { width: 7px; height: 12px; margin-right: 13px; background: currentColor; clip-path: polygon(0 0, 100% 50%, 0 100%); }
.popup kbd { font: inherit; margin-right: 42px; }
.popup .hot { background: #3399fd; color: #eaf4ff; }
.popup button:disabled { color: #97979b; }
.popup .head { height: 36px; padding-left: 12px; line-height: 34px; font-weight: 700; background: #ededf0; border: solid #c3c3c8; border-width: 1px 0; }
```
